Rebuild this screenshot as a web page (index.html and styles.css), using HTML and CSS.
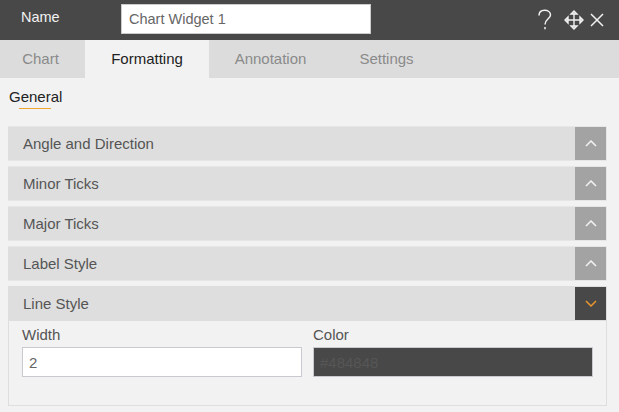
FILE: index.html
```html
<!DOCTYPE html>
<html>
    <head>
        <meta charset="utf-8"/>
        <link rel="stylesheet" href="styles.css">
    </head>
    <body>
        <header class="title-bar">
            <span class="name-label">Name</span>
            <input type="text" class="name-input" value="Chart Widget 1">
            <div class="title-icons">
                <svg class="icon-help" width="16" height="22" viewBox="0 0 16 22" fill="none" stroke="#f2f2f2" stroke-width="1.5">
                    <path d="M2 6.5 C2 3 4.5 1.2 7.5 1.2 C10.8 1.2 13.5 3 13.5 6 C13.5 9.8 8 10 8 15.5"/>
                    <path d="M8 18 V20.2"/>
                </svg>
                <svg class="icon-move" width="20" height="20" viewBox="0 0 20 20" fill="none" stroke="#f2f2f2" stroke-width="1.4">
                    <path d="M10 1 V19 M1 10 H19"/>
                    <path d="M7 4 L10 1 L13 4 Z M7 16 L10 19 L13 16 Z M4 7 L1 10 L4 13 Z M16 7 L19 10 L16 13 Z"/>
                </svg>
                <svg class="icon-close" width="16" height="16" viewBox="0 0 16 16" fill="none" stroke="#f2f2f2" stroke-width="1.5">
                    <path d="M2 2 L14 14 M14 2 L2 14"/>
                </svg>
            </div>
        </header>

        <nav class="tabs">
            <button class="tab tab-chart">Chart</button>
            <button class="tab tab-active">Formatting</button>
            <button class="tab tab-annotation">Annotation</button>
            <button class="tab tab-settings">Settings</button>
        </nav>

        <div class="sub-tabs">
            <span class="sub-tab">General</span>
            <div class="sub-tab-line"></div>
        </div>

        <main class="sections">
            <div class="section">
                <span class="section-title">Angle and Direction</span>
                <span class="toggle">
                    <svg width="12" height="7" viewBox="0 0 12 7" fill="none" stroke="#f2f2f2" stroke-width="1.5"><path d="M1 6 L6 1 L11 6"/></svg>
                </span>
            </div>
            <div class="section">
                <span class="section-title">Minor Ticks</span>
                <span class="toggle">
                    <svg width="12" height="7" viewBox="0 0 12 7" fill="none" stroke="#f2f2f2" stroke-width="1.5"><path d="M1 6 L6 1 L11 6"/></svg>
                </span>
            </div>
            <div class="section">
                <span class="section-title">Major Ticks</span>
                <span class="toggle">
                    <svg width="12" height="7" viewBox="0 0 12 7" fill="none" stroke="#f2f2f2" stroke-width="1.5"><path d="M1 6 L6 1 L11 6"/></svg>
                </span>
            </div>
            <div class="section">
                <span class="section-title">Label Style</span>
                <span class="toggle">
                    <svg width="12" height="7" viewBox="0 0 12 7" fill="none" stroke="#f2f2f2" stroke-width="1.5"><path d="M1 6 L6 1 L11 6"/></svg>
                </span>
            </div>
            <div class="open-section">
                <div class="section section-open">
                    <span class="section-title">Line Style</span>
                    <span class="toggle toggle-open">
                        <svg width="12" height="7" viewBox="0 0 12 7" fill="none" stroke="#e8962e" stroke-width="1.5"><path d="M1 1 L6 6 L11 1"/></svg>
                    </span>
                </div>
                <div class="fields">
                    <label class="field">
                        Width
                        <input type="text" class="field-input" value="2">
                    </label>
                    <label class="field">
                        Color
                        <input type="text" class="field-input color-input" value="#484848">
                    </label>
                </div>
            </div>
        </main>
    </body>
</html>
```

FILE: styles.css
```css
body {
    margin: 0;
    padding: 0;
    height: 412px;
    overflow: hidden;
    background: #f2f2f2;
    color: #555;
    font-family: "Liberation Sans", Arial, sans-serif;
    font-size: 15px;
}

.title-bar {
    height: 40px;
    background: #484848;
    display: flex;
    align-items: center;
}

.name-label {
    margin-left: 21px;
    width: 100px;
    color: #f2f2f2;
    font-size: 14.5px;
    margin-top: -6px;
}

.name-input {
    width: 250px;
    height: 30px;
    box-sizing: border-box;
    margin-top: -2px;
    padding: 0 7px;
    border: 1px solid #ccc;
    background: #fff;
    color: #666;
    font-family: inherit;
    font-size: 14.5px;
}

.title-icons {
    margin-left: auto;
    margin-right: 14px;
    display: flex;
    align-items: center;
    gap: 5px;
}

.icon-help { margin-right: 6px; }

.tabs {
    height: 38px;
    background: #dcdcdc;
    display: flex;
}

.tab {
    border: 0;
    padding: 0 0 2px;
    background: none;
    color: #8a8a8a;
    font-family: inherit;
    font-size: 15px;
}

.tab-chart { width: 85px; padding-right: 4px; }
.tab-active { width: 124px; background: #f2f2f2; color: #222; }
.tab-annotation { width: 123px; }
.tab-settings { width: 109px; }

.sub-tabs {
    height: 48px;
    box-sizing: border-box;
    padding: 10px 0 0 9px;
}

.sub-tab {
    display: block;
    color: #222;
    line-height: 17px;
}

.sub-tab-line {
    width: 32px;
    height: 1px;
    margin: 3px 0 0 10px;
    background: #eda52e;
}

.sections {
    margin: 0 12px 0 8px;
    display: flex;
    flex-direction: column;
    gap: 5px;
}

.section {
    height: 35px;
    box-sizing: border-box;
    background: #dedede;
    border: 1px solid #e6e6e6;
    border-left: 0;
    display: flex;
    align-items: center;
    justify-content: space-between;
    padding-left: 15px;
}

.section-title {
    color: #555;
}

.toggle {
    width: 31px;
    height: 33px;
    background: #a3a3a3;
    display: flex;
    align-items: center;
    justify-content: center;
}

.toggle-open {
    background: #484848;
}

.open-section {
    height: 120px;
    box-sizing: border-box;
    border: 1px solid #dedede;
    border-top: 0;
}

.section-open {
    border: 0;
    height: 35px;
    padding-left: 14px;
}

.fields {
    display: grid;
    grid-template-columns: 280px 280px;
    gap: 11px;
    padding: 6px 0 0 13px;
}

.field {
    display: flex;
    flex-direction: column;
    gap: 4px;
    color: #555;
    line-height: 16px;
}

.field-input {
    height: 30px;
    box-sizing: border-box;
    border: 1px solid #c9c9d2;
    background: #fff;
    padding: 0 6px;
    color: #666;
    font-family: inherit;
    font-size: 15px;
}

.color-input {
    background: #484848;
    color: #565656;
}
```
